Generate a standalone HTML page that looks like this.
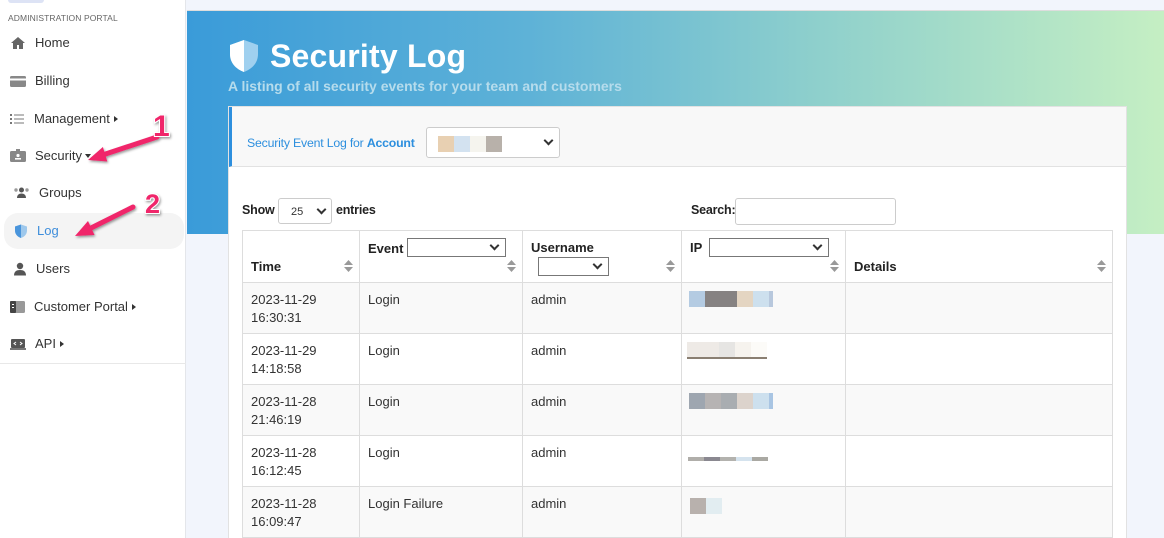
<!DOCTYPE html>
<html><head><meta charset="utf-8"><style>
*{box-sizing:border-box;margin:0;padding:0}
html,body{width:1164px;height:538px;overflow:hidden}
body{background:#f2f5fc;font-family:"Liberation Sans","DejaVu Sans",sans-serif;position:relative;color:#333}
.side{position:absolute;left:0;top:0;width:186px;height:538px;background:#fff;border-right:1px solid #e4e6ea}
.side .cap{position:absolute;left:8px;top:13px;font-size:8.5px;color:#666;letter-spacing:.1px}
.it{position:absolute;left:10px;font-size:13px;color:#333;display:flex;align-items:center}
.it svg{margin-right:9px}
.tri{display:inline-block;margin-left:4px;width:0;height:0;border-top:3px solid transparent;border-bottom:3px solid transparent;border-left:4px solid #333}
.trd{display:inline-block;margin-left:3px;width:0;height:0;border-left:3px solid transparent;border-right:3px solid transparent;border-top:4px solid #333}
.sel{position:absolute;left:4px;top:213px;width:180px;height:36px;border-radius:14px;background:#f4f4f4}
.sideend{position:absolute;left:0;top:363px;width:186px;border-top:1px solid #e8e8e8}
.banner{position:absolute;left:187px;top:11px;width:977px;height:223px;background:linear-gradient(90deg,#3a9bd9 0%,#5eb2d7 35%,#8fd0cc 65%,#c5efc3 100%)}
.topline{position:absolute;left:187px;top:10px;width:977px;height:1px;background:#ddd}
h1{position:absolute;left:270px;top:38px;font-size:32px;font-weight:bold;color:#fff;letter-spacing:.2px}
.sub{position:absolute;left:228px;top:78px;font-size:14px;font-weight:bold;color:#b6dcec}
.card{position:absolute;left:228px;top:106px;width:899px;height:440px;background:#fff;border:1px solid #e2e2e2}
.chead{position:absolute;left:0;top:0;width:897px;height:60px;background:#f8f8f8;border-left:3px solid #2d8fde;border-bottom:1px solid #e2e2e2}
.chead .t{position:absolute;left:15px;top:29px;font-size:12.3px;color:#2d8fde;letter-spacing:-.2px}
.acc{position:absolute;left:194px;top:20px;width:134px;height:31px;border:1px solid #ccc;border-radius:3px;background:#fff}
.chev{position:absolute;width:7px;height:7px;border-right:2px solid #333;border-bottom:2px solid #333;transform:rotate(45deg)}
.lbl{position:absolute;font-size:12.5px;font-weight:bold;color:#222;letter-spacing:-.2px}
.box{position:absolute;border:1px solid #999;background:#fff}
table{position:absolute;left:242px;top:230px;border-collapse:collapse;font-size:13px}
td,th{border:1px solid #ddd;vertical-align:top;padding:0 8px;text-align:left;position:relative}
th{height:52px;font-weight:bold;color:#222}
td{height:51px;padding-top:8px;line-height:18px;color:#333}
tr.o td{background:#f9f9f9}
.sort{position:absolute;right:6px;bottom:10px;width:9px;height:12px}
.px{position:absolute;height:16px}
</style></head><body>
<div class="side">
 <div style="position:absolute;left:8px;top:0;width:36px;height:3px;background:#dde3f5;border-radius:0 0 3px 3px"></div>
 <div class="cap">ADMINISTRATION PORTAL</div>
 <div class="sel"></div>
 <div class="it" style="top:35px"><svg width="16" height="14" viewBox="0 0 16 14"><path d="M8 1L1 7h2v6h4V9h2v4h4V7h2z" fill="#666"/></svg>Home</div>
 <div class="it" style="top:73px"><svg width="16" height="14" viewBox="0 0 16 14"><rect x="0" y="2" width="16" height="11" rx="1.5" fill="#888"/><rect x="0" y="4.5" width="16" height="2" fill="#fff"/></svg>Billing</div>
 <div class="it" style="top:111px"><svg width="15" height="14" viewBox="0 0 15 14"><g fill="#777"><rect x="0" y="2" width="2" height="2"/><rect x="0" y="6" width="2" height="2"/><rect x="0" y="10" width="2" height="2"/><rect x="4" y="2.5" width="10" height="1"/><rect x="4" y="6.5" width="10" height="1"/><rect x="4" y="10.5" width="10" height="1"/></g></svg>Management<span class="tri"></span></div>
 <div class="it" style="top:148px"><svg width="16" height="14" viewBox="0 0 16 14"><rect x="0" y="2" width="16" height="11" rx="1.5" fill="#888"/><circle cx="8" cy="6.5" r="1.6" fill="#fff"/><rect x="5" y="9" width="6" height="1.6" fill="#fff"/><rect x="6" y="0" width="4" height="3" fill="#888"/></svg>Security<span class="trd"></span></div>
 <div class="it" style="top:185px;left:13px"><svg width="17" height="14" viewBox="0 0 17 14"><g fill="#555"><circle cx="8.5" cy="4" r="2.5"/><path d="M4 12c0-3 2-4.5 4.5-4.5S13 9 13 12z"/><circle cx="3" cy="4" r="1.7" fill="#999"/><circle cx="14" cy="4" r="1.7" fill="#999"/></g></svg>Groups</div>
 <div class="it" style="top:223px;left:14px;color:#3d8ddb"><svg width="14" height="14" viewBox="0 0 14 14"><path d="M7 0.5L1 2.5v4c0 4 3 6.5 6 7.5 3-1 6-3.5 6-7.5v-4z" fill="#9ec8ec"/><path d="M7 0.5L1 2.5v4c0 4 3 6.5 6 7.5z" fill="#4a95dc"/></svg>Log</div>
 <div class="it" style="top:261px;left:13px"><svg width="14" height="14" viewBox="0 0 14 14"><circle cx="7" cy="4" r="3.2" fill="#555"/><path d="M1 13.5c0-4 2.5-5.5 6-5.5s6 1.5 6 5.5z" fill="#555"/></svg>Users</div>
 <div class="it" style="top:299px"><svg width="15" height="14" viewBox="0 0 15 14"><rect x="0" y="1" width="15" height="12" rx="1.5" fill="#999"/><rect x="0" y="1" width="6" height="12" rx="1" fill="#444"/><rect x="2" y="4" width="2" height="1" fill="#fff"/><rect x="2" y="7" width="2" height="1" fill="#fff"/></svg>Customer Portal<span class="tri"></span></div>
 <div class="it" style="top:336px"><svg width="16" height="14" viewBox="0 0 16 14"><rect x="1" y="2" width="14" height="9" rx="1" fill="#555"/><rect x="0" y="11" width="16" height="2" fill="#777"/><path d="M6 5l-2 1.5L6 8M10 5l2 1.5L10 8" stroke="#fff" fill="none"/></svg>API<span class="tri"></span></div>
 <div class="sideend"></div>
</div>
<svg style="position:absolute;left:0;top:0" width="186" height="260">
 <defs><filter id="sh"><feDropShadow dx="1" dy="1.5" stdDeviation="1.2" flood-opacity=".4"/></filter></defs>
 <g filter="url(#sh)">
  <line x1="157" y1="137" x2="104" y2="154.5" stroke="#f0256b" stroke-width="5" stroke-linecap="round"/>
  <polygon points="88,160 107.3,161.5 102.9,147" fill="#f0256b"/>
  <line x1="133" y1="207" x2="90" y2="228.5" stroke="#f0256b" stroke-width="5" stroke-linecap="round"/>
  <polygon points="75,236 94.5,235 88,221" fill="#f0256b"/>
  <text x="153" y="136" font-size="30" font-weight="bold" font-family="Liberation Sans, sans-serif" fill="#f0256b" stroke="#fff" stroke-width="2" paint-order="stroke">1</text>
  <text x="145" y="213" font-size="27" font-weight="bold" font-family="Liberation Sans, sans-serif" fill="#f0256b" stroke="#fff" stroke-width="2" paint-order="stroke">2</text>
 </g>
</svg>
<div class="topline"></div>
<div class="banner"></div>
<svg style="position:absolute;left:228px;top:39px" width="32" height="34" viewBox="0 0 32 34"><path d="M16 1L2 6v9c0 9 6 15 14 18 8-3 14-9 14-18V6z" fill="#9fd0ef"/><path d="M16 1L2 6v9c0 9 6 15 14 18z" fill="#fff"/></svg>
<h1>Security Log</h1>
<div class="sub">A listing of all security events for your team and customers</div>
<div class="card">
 <div class="chead"><div class="t">Security Event Log for <b>Account</b></div>
  <div class="acc"><div class="px" style="left:11px;top:8px;width:16px;background:#e8d0b2"></div><div class="px" style="left:27px;top:8px;width:16px;background:#d3e2f0"></div><div class="px" style="left:43px;top:8px;width:16px;background:#f5f4ee"></div><div class="px" style="left:59px;top:8px;width:16px;background:#b8b1aa"></div><div class="chev" style="left:118px;top:9px"></div></div>
 </div>
</div>
<div class="lbl" style="left:242px;top:203px">Show</div>
<div class="box" style="left:278px;top:198px;width:54px;height:26px;border-color:#ccc;border-radius:3px;font-size:11px;padding:7px 0 0 12px">25<div class="chev" style="left:39px;top:7px"></div></div>
<div class="lbl" style="left:336px;top:203px">entries</div>
<div class="lbl" style="left:691px;top:203px">Search:</div>
<div class="box" style="left:735px;top:198px;width:161px;height:27px;border-color:#ccc;border-radius:3px"></div>
<table>
<tr><th style="width:117px"><div style="position:absolute;left:8px;top:28px">Time</div><svg class="sort" viewBox="0 0 9 12"><path d="M4.5 0L9 5H0zM4.5 12L0 7h9z" fill="#999"/></svg></th>
<th style="width:163px"><div style="position:absolute;left:8px;top:10px">Event</div><div class="box" style="left:47px;top:7px;width:99px;height:19px;border-color:#777"><div class="chev" style="left:83px;top:3px"></div></div><svg class="sort" viewBox="0 0 9 12"><path d="M4.5 0L9 5H0zM4.5 12L0 7h9z" fill="#999"/></svg></th>
<th style="width:159px"><div style="position:absolute;left:8px;top:9px">Username</div><div class="box" style="left:15px;top:26px;width:71px;height:19px;border-color:#777"><div class="chev" style="left:55px;top:3px"></div></div><svg class="sort" viewBox="0 0 9 12"><path d="M4.5 0L9 5H0zM4.5 12L0 7h9z" fill="#999"/></svg></th>
<th style="width:164px"><div style="position:absolute;left:8px;top:9px">IP</div><div class="box" style="left:27px;top:7px;width:120px;height:19px;border-color:#777"><div class="chev" style="left:104px;top:3px"></div></div><svg class="sort" viewBox="0 0 9 12"><path d="M4.5 0L9 5H0zM4.5 12L0 7h9z" fill="#999"/></svg></th>
<th style="width:267px"><div style="position:absolute;left:8px;top:28px">Details</div><svg class="sort" viewBox="0 0 9 12"><path d="M4.5 0L9 5H0zM4.5 12L0 7h9z" fill="#999"/></svg></th></tr>
<tr class="o"><td>2023-11-29<br>16:30:31</td><td>Login</td><td>admin</td><td><div class="px" style="left:7px;top:8px;width:84px;background:linear-gradient(90deg,#b4cbe2 0 16px,#868282 16px 48px,#e4d5c2 48px 64px,#cde0ee 64px 80px,#b8c8dd 80px)"></div></td><td></td></tr>
<tr><td>2023-11-29<br>14:18:58</td><td>Login</td><td>admin</td><td><div class="px" style="left:5px;top:8px;width:80px;height:17px;background:linear-gradient(180deg,transparent 15px,#8a7f72 15px),linear-gradient(90deg,#eeeae6 0 32px,#e6e5e3 32px 48px,#f6f3ee 48px 64px,#fcfbf8 64px)"></div></td><td></td></tr>
<tr class="o"><td>2023-11-28<br>21:46:19</td><td>Login</td><td>admin</td><td><div class="px" style="left:7px;top:8px;width:84px;background:linear-gradient(90deg,#9ea6b0 0 16px,#b6b3b3 16px 32px,#a9adb1 32px 48px,#dcd3cc 48px 64px,#cde0ee 64px 80px,#a9c5e3 80px)"></div></td><td></td></tr>
<tr><td>2023-11-28<br>16:12:45</td><td>Login</td><td>admin</td><td><div class="px" style="left:6px;top:21px;width:80px;height:4px;background:linear-gradient(90deg,#b0aeaa 0 16px,#8a8890 16px 32px,#b3b2ae 32px 48px,#d5e3ee 48px 64px,#aaa9a3 64px)"></div></td><td></td></tr>
<tr class="o"><td>2023-11-28<br>16:09:47</td><td>Login Failure</td><td>admin</td><td><div class="px" style="left:8px;top:11px;width:32px;background:linear-gradient(90deg,#b8b1ad 0 16px,#e2edf1 16px)"></div></td><td></td></tr>
</table>
</body></html>
